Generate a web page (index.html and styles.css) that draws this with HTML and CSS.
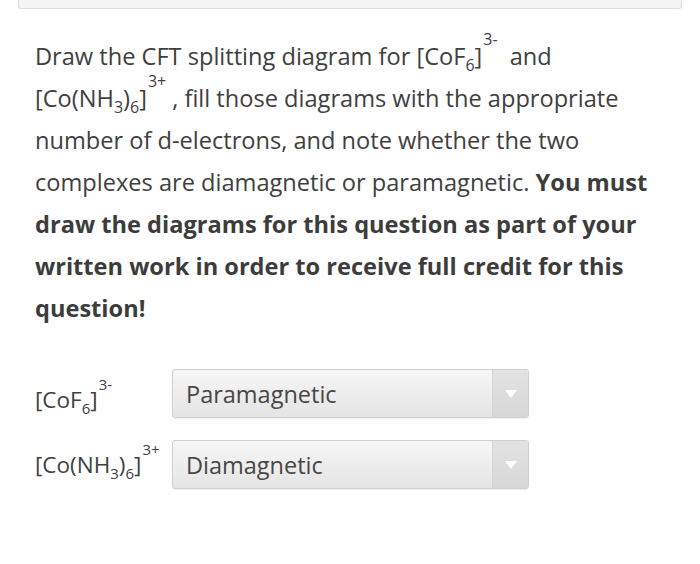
FILE: index.html
```html
<!DOCTYPE html>
<html>
<head>
<meta charset="utf-8">
<link rel="stylesheet" href="styles.css">
</head>
<body>
<div class="topbox"></div>
<p class="question">Draw the CFT splitting diagram for [CoF<sub>6</sub>]<sup>3-</sup> and<br>[Co(NH<sub>3</sub>)<sub>6</sub>]<sup>3+</sup>, fill those diagrams with the appropriate<br>number of d-electrons, and note whether the two<br>complexes are diamagnetic or paramagnetic. <b>You must<br>draw the diagrams for this question as part of your<br>written work in order to receive full credit for this<br>question!</b></p>
<div class="answers">
  <div class="row">
    <div class="label low">[CoF<sub>6</sub>]<sup>3-</sup></div>
    <div class="select"><span class="value">Paramagnetic</span><span class="arrow"><svg width="14" height="10" viewBox="0 0 14 10"><path d="M1 1 L13 1 L7 9 Z" fill="#fff"/></svg></span></div>
  </div>
  <div class="row">
    <div class="label">[Co(NH<sub>3</sub>)<sub>6</sub>]<sup>3+</sup></div>
    <div class="select"><span class="value">Diamagnetic</span><span class="arrow"><svg width="14" height="10" viewBox="0 0 14 10"><path d="M1 1 L13 1 L7 9 Z" fill="#fff"/></svg></span></div>
  </div>
</div>
</body>
</html>
```
FILE: styles.css
```css
html, body {
  margin: 0;
  padding: 0;
  background: #fff;
}
body {
  font-family: "Open Sans", "Liberation Sans", sans-serif;
  color: #404040;
  width: 700px;
  height: 564px;
  overflow: hidden;
}
.topbox {
  margin: 0 18px 0 18px;
  height: 8px;
  background: #f4f4f4;
  border: 1px solid #dcdcdc;
  border-top: none;
  border-radius: 0 0 3px 3px;
}
.question {
  margin: 26px 0 0 35px;
  font-size: 23.6px;
  line-height: 42px;
}
.question b {
  font-weight: 700;
  color: #3c3c3c;
}
sup, sub {
  font-size: 16px;
  line-height: 0;
  position: relative;
  vertical-align: baseline;
}
sup {
  top: -20px;
  margin-left: 1px;
  margin-right: 6px;
}
sub {
  top: 6px;
}
.answers {
  margin: 40px 0 0 35px;
  display: flex;
  flex-direction: column;
  gap: 22px;
}
.row {
  display: flex;
  align-items: center;
}
.label {
  width: 137px;
  font-size: 22.5px;
  line-height: 30px;
}
.label.low {
  padding-top: 12px;
}
.label sup {
  font-size: 15px;
  top: -18px;
  margin-right: 0;
}
.label sub {
  font-size: 15px;
  top: 6px;
}
.select {
  width: 355px;
  height: 47px;
  border: 1px solid #cfcfcf;
  border-radius: 3px;
  background: linear-gradient(#f7f7f7, #e4e4e4);
  display: flex;
  align-items: center;
  box-shadow: 0 1px 1px rgba(0,0,0,0.06);
}
.value {
  flex: 1;
  padding-left: 13px;
  font-size: 23.5px;
  color: #474747;
}
.arrow {
  width: 35px;
  height: 100%;
  background: linear-gradient(#e3e3e3, #d7d7d7);
  border-left: 1px solid #d5d5d5;
  border-radius: 0 3px 3px 0;
  display: flex;
  align-items: center;
  justify-content: center;
}
```
